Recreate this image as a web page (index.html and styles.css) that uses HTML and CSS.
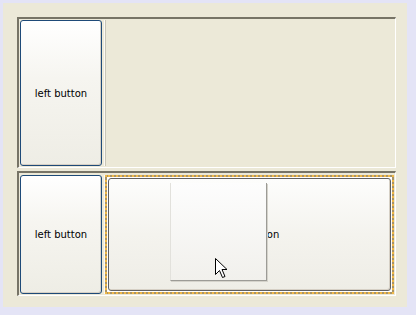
FILE: index.html
```
<!DOCTYPE html>
<html>
<head>
<meta charset="utf-8">
<link rel="stylesheet" href="styles.css">
</head>
<body>
<div class="window">
  <div class="panel panel-top">
    <button class="btn left-btn">left button</button>
    <div class="splitter"></div>
    <div class="pane"></div>
  </div>
  <div class="panel panel-bottom">
    <button class="btn left-btn">left button</button>
    <div class="splitter"></div>
    <div class="drop-target">
      <button class="btn right-btn">right button</button>
    </div>
  </div>
  <div class="ghost"></div>
  <svg class="cursor" width="13" height="21" viewBox="0 0 13 21">
    <path d="M0.5 0.5 L0.5 16.5 L4.5 12.5 L7.5 19.5 L10 18.5 L7 11.5 L12 11.5 Z" fill="#fff" stroke="#000" stroke-width="1" stroke-linejoin="miter"/>
  </svg>
</div>
</body>
</html>
```
FILE: styles.css
```
html, body {
  margin: 0;
  padding: 0;
}
body {
  width: 416px;
  height: 315px;
  background: #e4e4f6;
  overflow: hidden;
  font-family: "DejaVu Sans", "Liberation Sans", sans-serif;
}
.window {
  position: relative;
  box-sizing: border-box;
  margin: 3px 0 0 3px;
  width: 404px;
  height: 304px;
  padding: 14px 11px 0 14px;
  background: #ece9d8;
  display: flex;
  flex-direction: column;
  gap: 3px;
}
.panel {
  display: flex;
  box-sizing: border-box;
  border-top: 2px solid #777466;
  border-left: 2px solid #777466;
  border-right: 1px solid #ffffff;
  border-bottom: 1px solid #ffffff;
  padding: 1px;
}
.panel-top {
  height: 151px;
}
.panel-bottom {
  height: 125px;
  padding-top: 2px;
}
.btn {
  font-family: "DejaVu Sans", "Liberation Sans", sans-serif;
  font-size: 10px;
  color: #000;
  border: 1px solid #1e4a78;
  border-radius: 3px;
  background: linear-gradient(#ffffff, #f6f5f0 40%, #eeede5);
  box-shadow: inset -1px -1px 0 #d6d0c5;
  padding: 0;
  margin: 0;
}
.left-btn {
  width: 82px;
  flex: none;
}
.splitter {
  width: 3px;
  flex: none;
  box-sizing: border-box;
  border-left: 1px solid #ece9d8;
  border-right: 1px solid #fbfaf6;
}
.pane {
  flex: 1;
  border-left: 1px solid #c9c6b8;
}
.drop-target {
  flex: 1;
  box-sizing: border-box;
  border: 2px dotted #f0b848;
  background: linear-gradient(#fff, #fff) padding-box, #a89468 border-box;
  padding: 1px;
  display: flex;
}
.right-btn {
  flex: 1;
  border-color: #5f5f5f;
  background: linear-gradient(#fdfdfc, #f4f3ee 50%, #eeede6);
}
.ghost {
  position: absolute;
  left: 167px;
  top: 180px;
  width: 95px;
  height: 97px;
  background: linear-gradient(#fdfdfd, #f1f0ec);
  border-left: 1px solid #e2e1dc;
  border-right: 1px solid #9c9b96;
  border-bottom: 1px solid #9c9b96;
  box-shadow: 1px 1px 0 #d5d3cb;
}
.cursor {
  position: absolute;
  left: 212px;
  top: 255px;
}
```
